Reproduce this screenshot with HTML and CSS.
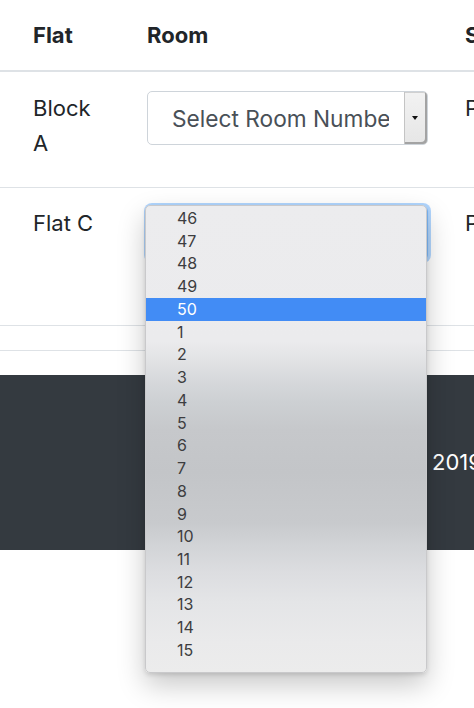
FILE: index.html
```html
<!DOCTYPE html>
<html lang="en">
<head>
    <meta charset="UTF-8">
    <meta name="viewport" content="width=device-width, initial-scale=1.0">
    <title>Room Allocation</title>
    <link rel="stylesheet" href="styles.css">
</head>
<body>
    <div class="page">
        <table class="rooms">
            <thead>
                <tr>
                    <th class="col-flat">Flat</th>
                    <th class="col-room">Room</th>
                    <th class="col-status">Status</th>
                </tr>
            </thead>
            <tbody>
                <tr class="row-one">
                    <td class="col-flat">Block A</td>
                    <td class="col-room">
                        <div class="room-select">
                            <span class="room-select-text">Select Room Number</span>
                            <span class="room-select-arrow"></span>
                        </div>
                    </td>
                    <td class="col-status">Pending</td>
                </tr>
                <tr class="row-two">
                    <td class="col-flat">Flat C</td>
                    <td class="col-room">
                        <div class="room-select focused">
                            <span class="room-select-text"></span>
                        </div>
                        <!-- open option list of the focused select -->
                        <ul class="room-list">
                            <li>46</li>
                            <li>47</li>
                            <li>48</li>
                            <li>49</li>
                            <li class="active">50</li>
                            <li>1</li>
                            <li>2</li>
                            <li>3</li>
                            <li>4</li>
                            <li>5</li>
                            <li>6</li>
                            <li>7</li>
                            <li>8</li>
                            <li>9</li>
                            <li>10</li>
                            <li>11</li>
                            <li>12</li>
                            <li>13</li>
                            <li>14</li>
                            <li>15</li>
                        </ul>
                    </td>
                    <td class="col-status">Pending</td>
                </tr>
                <tr class="row-empty">
                    <td></td>
                    <td></td>
                    <td></td>
                </tr>
            </tbody>
        </table>

        <footer class="footer">
            <span>2019 Hostel Management</span>
        </footer>
    </div>
</body>
</html>
```

FILE: styles.css
```css
html {
    overflow: hidden;
}
body {
    margin: 0;
    padding: 0;
    background: #fff;
    font-family: Inter, "Liberation Sans", sans-serif;
    font-size: 22px;
    line-height: 35px;
    color: #212529;
}
.page {
    width: 474px;
    min-height: 708px;
    overflow: hidden;
}
.rooms {
    border-collapse: collapse;
    width: 620px;
}
.rooms th, .rooms td {
    vertical-align: top;
    text-align: left;
    padding: 0;
}
.rooms th {
    font-weight: bold;
    padding-top: 18px;
    padding-bottom: 17px;
    border-bottom: 2px solid #dee2e6;
}
.col-flat {
    width: 70px;
    padding-left: 33px !important;
    padding-right: 28px !important;
}
.col-room {
    width: 281px;
    padding-left: 16px !important;
    padding-right: 21px !important;
    position: relative;
}
.col-status {
    padding-left: 16px !important;
    white-space: nowrap;
}
.row-one td {
    padding-top: 19px;
    padding-bottom: 26px;
    border-bottom: 1px solid #dee2e6;
}
.row-two td {
    padding-top: 18px;
    padding-bottom: 65px;
    border-bottom: 1px solid #dee2e6;
}
.row-empty td {
    height: 24px;
    border-bottom: 1px solid #dee2e6;
}

/* select box */
.room-select {
    box-sizing: border-box;
    height: 54px;
    border: 1px solid #ced4da;
    border-radius: 5px;
    background: #fff;
    display: flex;
    align-items: center;
    position: relative;
}
.room-select.focused {
    border-color: #80bdff;
    box-shadow: 0 0 0 3px rgba(0, 123, 255, 0.3);
}
.room-select-text {
    width: 217px;
    margin-left: 24px;
    overflow: hidden;
    white-space: nowrap;
    font-size: 22.7px;
    color: #495057;
}
.room-select-arrow {
    position: absolute;
    right: 0;
    top: 0;
    bottom: 0;
    width: 22px;
    border-left: 1px solid #c4c4c4;
    border-radius: 0 4px 4px 0;
    background: linear-gradient(#f2f2f2, #e6e6e6);
    box-shadow: inset -2px -2px 0 #a3a3a3, inset 0 1px 0 #d0d0d0;
}
.room-select-arrow::after {
    content: "";
    position: absolute;
    left: 7px;
    top: 24px;
    border-left: 3px solid transparent;
    border-right: 3px solid transparent;
    border-top: 4px solid #111;
}

/* open dropdown */
.room-list {
    position: absolute;
    top: 17px;
    left: 14px;
    width: 282px;
    box-sizing: border-box;
    margin: 0;
    padding: 1px 0 10px;
    list-style: none;
    border: 1px solid #c9c9cb;
    border-radius: 5px;
    background: linear-gradient(
        #ececee 0%,
        #ebebed 29%,
        #e2e3e5 33%,
        #d6d8db 37.6%,
        #cdd0d3 42%,
        #c6c8cb 48%,
        #c3c5c8 57%,
        #c8cacd 68%,
        #d2d4d7 73%,
        #dcdde0 78.5%,
        #e4e5e7 85%,
        #eaeaeb 93.5%,
        #ececec 100%
    );
    box-shadow: 0 12px 28px rgba(0, 0, 0, 0.22), 0 2px 4px rgba(0, 0, 0, 0.12);
    z-index: 2;
    font-size: 16px;
    line-height: 22.74px;
    color: #3d3d40;
}
.room-list li {
    padding-left: 31px;
}
.room-list li.active {
    background: #428cf5;
    color: #fff;
}

/* footer */
.footer {
    margin-top: 24px;
    height: 175px;
    background: #343a40;
    color: #fff;
    display: flex;
    align-items: center;
    padding-left: 432px;
    white-space: nowrap;
}
```
